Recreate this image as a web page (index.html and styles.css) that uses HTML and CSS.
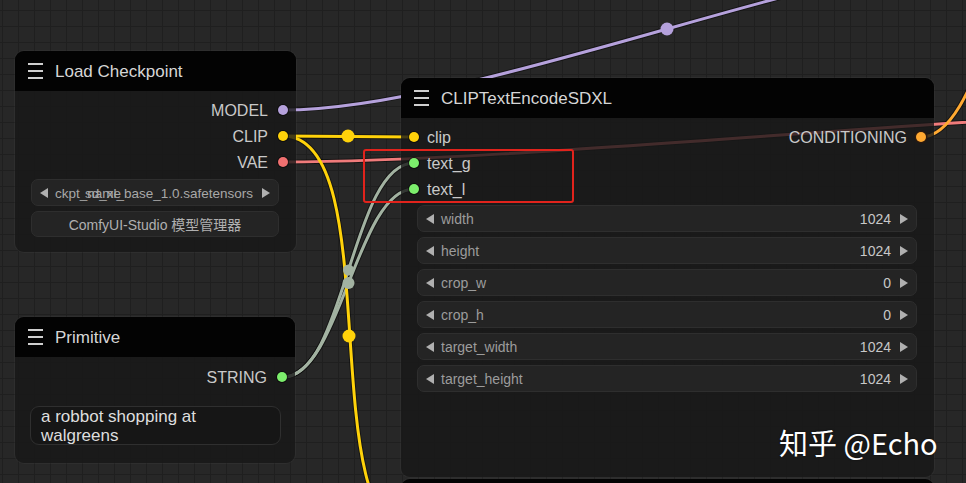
FILE: index.html
```html
<!DOCTYPE html>
<html>
<head>
<meta charset="utf-8">
<link rel="stylesheet" href="styles.css">
</head>
<body>
<div class="canvas">
  <svg class="links" width="966" height="483" viewBox="0 0 966 483">
    <g class="shadow">
      <path d="M283 110 C479 110 855 -52 1051 -52"/>
      <path d="M283 162 C525 162 1008 110 1250 110"/>
      <path d="M283 377 C345.7 377 351.3 163 414 163"/>
      <path d="M283 377 C340.3 377 356.7 189 414 189"/>
      <path d="M283 136 C315.75 136 381.25 137 414 137"/>
      <path d="M283 136 C390 136 310 536 416 536"/>
      <path d="M921 137 C981 137 1000 -60 1060 -60"/>
    </g>
    <path class="w-model" d="M283 110 C479 110 855 -52 1051 -52"/>
    <path class="w-vae" d="M283 162 C525 162 1008 110 1250 110"/>
    <path class="w-str" d="M283 377 C345.7 377 351.3 163 414 163"/>
    <path class="w-str" d="M283 377 C340.3 377 356.7 189 414 189"/>
    <path class="w-clip" d="M283 136 C315.75 136 381.25 137 414 137"/>
    <path class="w-clip" d="M283 136 C390 136 310 536 416 536"/>
    <path class="w-cond" d="M921 137 C981 137 1000 -60 1060 -60"/>
    <circle class="f-model" cx="667" cy="29" r="6.5"/>
    <circle class="f-clip" cx="348" cy="136" r="6.5"/>
    <circle class="f-clip" cx="349" cy="336" r="6.5"/>
    <circle class="f-str" cx="348.5" cy="270" r="5.5"/>
    <circle class="f-str" cx="348.5" cy="283" r="6"/>
  </svg>

  <div class="node n-ckpt">
    <div class="node-header"><span class="menu"><i></i><i></i><i></i></span><span class="title">Load Checkpoint</span></div>
    <div class="node-body">
      <div class="slot out"><span>MODEL</span><span class="dot c-model"></span></div>
      <div class="slot out"><span>CLIP</span><span class="dot c-clip"></span></div>
      <div class="slot out"><span>VAE</span><span class="dot c-vae"></span></div>
      <div class="widget combo">
        <span class="arr left"></span>
        <span class="wtext"><span class="wlabel">ckpt_name</span><span class="wval">sd_xl_base_1.0.safetensors</span></span>
        <span class="arr right"></span>
      </div>
      <div class="widget button">ComfyUI-Studio 模型管理器</div>
    </div>
  </div>

  <div class="node n-prim">
    <div class="node-header"><span class="menu"><i></i><i></i><i></i></span><span class="title">Primitive</span></div>
    <div class="node-body">
      <div class="slot out"><span>STRING</span><span class="dot c-str"></span></div>
      <div class="textarea">a robbot shopping at walgreens</div>
    </div>
  </div>

  <div class="node n-clip">
    <div class="node-header"><span class="menu"><i></i><i></i><i></i></span><span class="title">CLIPTextEncodeSDXL</span></div>
    <div class="node-body">
      <div class="slot both">
        <span class="pin"><span class="dot c-clip"></span><span>clip</span></span>
        <span class="pin"><span>CONDITIONING</span><span class="dot c-cond"></span></span>
      </div>
      <div class="slot in"><span class="dot c-str"></span><span>text_g</span></div>
      <div class="slot in"><span class="dot c-str"></span><span>text_l</span></div>
      <div class="widgets">
        <div class="widget num"><span class="arr left"></span><span class="wtext"><span class="wlabel">width</span><span class="wval">1024</span></span><span class="arr right"></span></div>
        <div class="widget num"><span class="arr left"></span><span class="wtext"><span class="wlabel">height</span><span class="wval">1024</span></span><span class="arr right"></span></div>
        <div class="widget num"><span class="arr left"></span><span class="wtext"><span class="wlabel">crop_w</span><span class="wval">0</span></span><span class="arr right"></span></div>
        <div class="widget num"><span class="arr left"></span><span class="wtext"><span class="wlabel">crop_h</span><span class="wval">0</span></span><span class="arr right"></span></div>
        <div class="widget num"><span class="arr left"></span><span class="wtext"><span class="wlabel">target_width</span><span class="wval">1024</span></span><span class="arr right"></span></div>
        <div class="widget num"><span class="arr left"></span><span class="wtext"><span class="wlabel">target_height</span><span class="wval">1024</span></span><span class="arr right"></span></div>
      </div>
    </div>
  </div>

  <div class="node n-next">
    <div class="node-header"></div>
  </div>

  <div class="highlight"></div>
  <div class="watermark">知乎 @Echo</div>
</div>
</body>
</html>
```

FILE: styles.css
```css
* { box-sizing: border-box; }
body { margin: 0; background: #252525; }

.canvas {
  position: relative;
  width: 966px;
  height: 483px;
  overflow: hidden;
  background-color: #272727;
  background-image:
    linear-gradient(to right, #1f1f1f 1px, transparent 1px),
    linear-gradient(to bottom, #1f1f1f 1px, transparent 1px);
  background-size: 16px 16px;
  background-position: 2px 10px;
  font-family: "Liberation Sans", Arial, sans-serif;
}

.links { position: absolute; left: 0; top: 0; }
.links path { fill: none; stroke-width: 3; }
.links .shadow path { stroke: rgba(0,0,0,0.45); stroke-width: 5; }
.w-model { stroke: #b5a1dc; }
.w-vae { stroke: #f07b7b; }
.w-str { stroke: #a2b2a1; }
.w-clip { stroke: #ffd20a; }
.w-cond { stroke: #ffa931; }
.f-model { fill: #b5a1dc; }
.f-clip { fill: #ffd20a; }
.f-str { fill: #a2b2a1; }

.node {
  position: absolute;
  background: rgba(24,24,24,0.8);
  border-radius: 9px;
  box-shadow: 0 0 0 1px rgba(255,255,255,0.035);
}
.node-header {
  height: 40px;
  background: #030303;
  border-radius: 9px 9px 0 0;
  display: flex;
  align-items: center;
  padding-left: 13px;
  gap: 12px;
  color: #d6d6d6;
  font-size: 17px;
}
.title { padding-top: 2px; }
.menu { display: flex; flex-direction: column; gap: 5px; width: 15px; }
.menu i { display: block; height: 2px; background: #cfcfcf; }

.n-ckpt { left: 15px; top: 51px; width: 281px; }
.n-prim { left: 15px; top: 317px; width: 280px; }
.n-clip { left: 401px; top: 78px; width: 533px; height: 399px; }
.n-next { left: 401px; top: 479px; width: 533px; height: 40px; }

.n-ckpt .node-body { padding: 6px 0 15px; }
.n-prim .node-body { padding: 7px 0 18px; }
.n-clip .node-body { padding-top: 6px; }

.slot {
  height: 26px;
  display: flex;
  align-items: center;
  font-size: 16px;
  color: #c9c9c9;
}
.slot span:not(.dot):not(.pin) { padding-top: 2px; }
.slot.out { justify-content: flex-end; padding-right: 8px; gap: 10px; }
.slot.in { padding-left: 8px; gap: 8px; }
.slot.both { justify-content: space-between; padding: 0 8px; }
.pin { display: flex; align-items: center; gap: 8px; }
.pin:last-child { gap: 9px; }

.dot { width: 10px; height: 10px; border-radius: 50%; flex: none; box-shadow: 0 0 0 1px rgba(0,0,0,0.5); }
.c-model { background: #b5a1dc; }
.c-clip { background: #ffd20a; }
.c-vae { background: #f07070; }
.c-str { background: #7cee6c; }
.c-cond { background: #ffa931; box-shadow: 0 0 0 1.5px #2a1a10; }

.widget {
  height: 27px;
  margin: 0 17px 0 16px;
  border-radius: 7px;
  background: #242424;
  border: 1px solid #2e2e2e;
  display: flex;
  align-items: center;
  padding: 0 8px;
  font-size: 14px;
}
.combo { margin-top: 4px; font-size: 13.5px; }
.button {
  margin-top: 5px;
  height: 26px;
  justify-content: center;
  color: #b0b0b0;
  font-family: "Liberation Sans", "Noto Sans CJK SC", sans-serif;
}
.wtext { flex: 1; display: grid; margin: 0 9px 0 7px; padding-top: 1px; }
.wlabel, .wval { grid-area: 1 / 1; white-space: nowrap; }
.wlabel { justify-self: start; color: #9c9c9c; }
.wval { justify-self: end; color: #c8c8c8; }
.combo .wlabel, .combo .wval { color: #a8a8a8; }

.arr { width: 0; height: 0; border-top: 5px solid transparent; border-bottom: 5px solid transparent; flex: none; }
.arr.left { border-right: 8px solid #b0b0b0; }
.arr.right { border-left: 8px solid #b0b0b0; }

.widgets { display: flex; flex-direction: column; gap: 5px; margin-top: 3px; }

.textarea {
  margin: 16px 14px 0 15px;
  height: 39px;
  border: 1px solid #2f2f2f;
  border-radius: 9px;
  background: rgba(20,20,20,0.6);
  padding: 0 10px;
  font-size: 17px;
  line-height: 19px;
  color: #dedede;
}

.highlight {
  position: absolute;
  left: 363px;
  top: 149px;
  width: 211px;
  height: 54px;
  border: 2.5px solid #e1231c;
  border-radius: 3px;
}

.watermark {
  position: absolute;
  left: 779px;
  top: 425px;
  font-family: "Noto Sans CJK SC", "Noto Sans", sans-serif;
  font-size: 29px;
  line-height: 34px;
  color: #ffffff;
  text-shadow: 0 0 2px rgba(0,0,0,0.6);
}
```
